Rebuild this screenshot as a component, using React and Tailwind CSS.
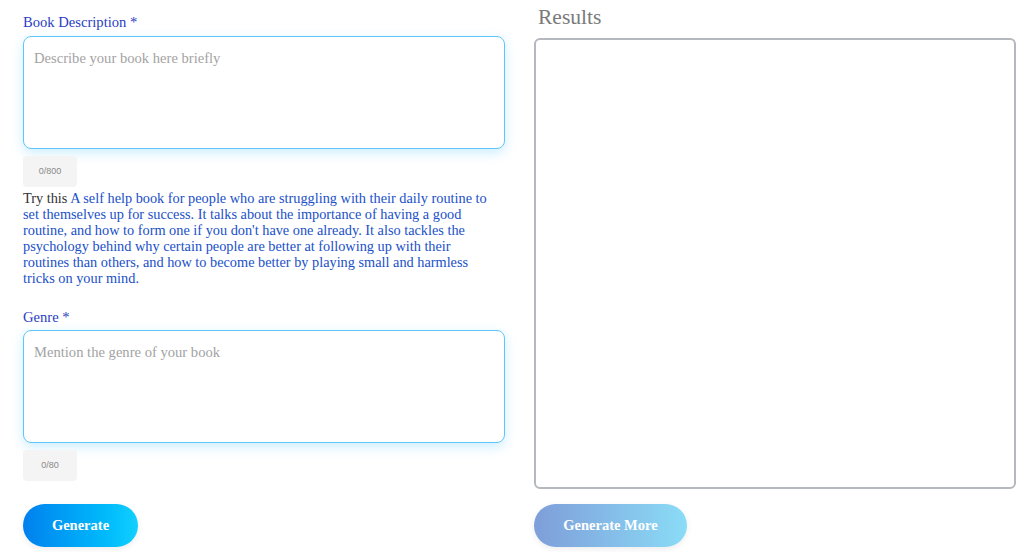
import React from "react";

export default function App() {
  return (
    <div className="w-[1024px] h-[552px] bg-white overflow-hidden font-['Liberation_Serif',serif]">
      <div className="grid grid-cols-[482px_482px] gap-x-[29px] pl-[23px]">
        {/* Left column */}
        <div className="flex flex-col">
          <label className="mt-[13px] h-[18px] text-[14.6px] leading-[18px] text-[#2a3ec2]">Book Description *</label>
          <textarea
            placeholder="Describe your book here briefly"
            className="mt-[5px] h-[113px] w-full resize-none rounded-[8px] border border-[#5ec6fb] px-[10px] py-[12px] text-[14.6px] leading-[18px] text-[#333] outline-none shadow-[0_4px_12px_rgba(94,198,251,0.3)] placeholder:text-[#a3a3a3] font-['Liberation_Serif',serif]"
          />
          <div className="mt-[7px] flex h-[31px] w-[54px] items-center justify-center rounded-[4px] bg-[#f4f4f4] font-['Liberation_Sans',sans-serif] text-[9px] text-[#8a8a8a]">
            0/800
          </div>
          <p className="mt-[3px] pr-[8px] text-[14.3px] leading-[16px] text-[#2050c8]">
            <span className="text-[#333]">Try this</span> A self help book for people who are struggling with their daily routine to set themselves up for success. It talks about the importance of having a good routine, and how to form one if you don't have one already. It also tackles the psychology behind why certain people are better at following up with their routines than others, and how to become better by playing small and harmless tricks on your mind.
          </p>
          <label className="mt-[22px] h-[18px] text-[14.6px] leading-[18px] text-[#2a3ec2]">Genre *</label>
          <textarea
            placeholder="Mention the genre of your book"
            className="mt-[4px] h-[113px] w-full resize-none rounded-[8px] border border-[#5ec6fb] px-[10px] py-[12px] text-[14.6px] leading-[18px] text-[#333] outline-none shadow-[0_4px_12px_rgba(94,198,251,0.3)] placeholder:text-[#a3a3a3] font-['Liberation_Serif',serif]"
          />
          <div className="mt-[7px] flex h-[31px] w-[54px] items-center justify-center rounded-[4px] bg-[#f4f4f4] font-['Liberation_Sans',sans-serif] text-[9px] text-[#8a8a8a]">
            0/80
          </div>
          <button className="mt-[23px] flex h-[43px] w-[115px] items-center justify-center rounded-full bg-gradient-to-r from-[#0080ee] to-[#12d0ff] text-[14.5px] font-bold text-white shadow-[0_2px_6px_rgba(0,0,0,0.08)] font-['Liberation_Serif',serif]">
            Generate
          </button>
        </div>

        {/* Right column */}
        <div className="flex flex-col">
          <h2 className="mt-[5px] ml-[4px] h-[25px] text-[21.5px] leading-[25px] text-[#7a7a7a]">Results</h2>
          <div className="mt-[8px] h-[451px] w-full rounded-[6px] border-2 border-[#b5b8bc] bg-white"></div>
          <button className="mt-[15px] flex h-[43px] w-[153px] items-center justify-center rounded-full bg-gradient-to-r from-[#7e9ed9] to-[#8adcf7] text-[14.5px] font-bold text-white shadow-[0_2px_6px_rgba(0,0,0,0.08)] font-['Liberation_Serif',serif]">
            Generate More
          </button>
        </div>
      </div>
    </div>
  );
}
